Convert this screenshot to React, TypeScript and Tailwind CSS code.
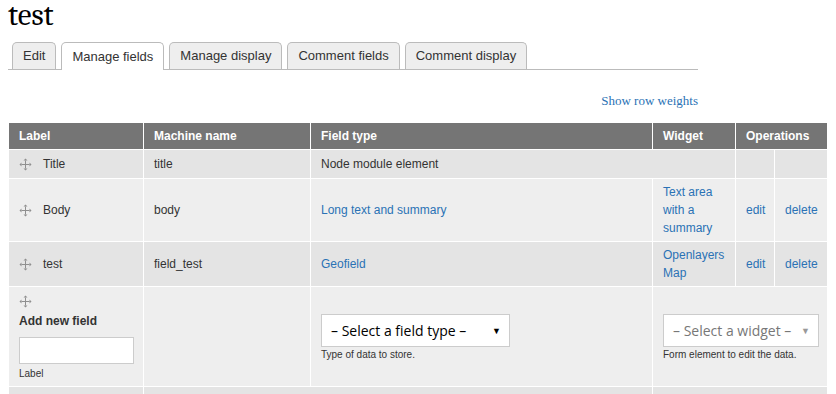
import React from "react";

const sans = "font-['Liberation_Sans',Arial,sans-serif]";
const serif = "font-['Liberation_Serif','Times_New_Roman',serif]";
const link = "text-[#2a72b5]";

function Handle() {
  return (
    <svg width="13" height="13" viewBox="0 0 13 13" className="shrink-0">
      <path d="M6.5 2.5v8M2.5 6.5h8" stroke="#8f8f8f" strokeWidth="1" />
      <path
        d="M6.5 0.5L4.5 2.5h4zM6.5 12.5l-2-2h4zM0.5 6.5l2-2v4zM12.5 6.5l-2-2v4z"
        fill="#8f8f8f"
      />
    </svg>
  );
}

function Tab({ label, active }: { label: string; active?: boolean }) {
  return (
    <div
      className={
        active
          ? "h-[28px] -mb-px px-[10px] flex items-center rounded-t-[5px] border border-b-0 border-[#bbb] bg-white text-[13px] text-[#333]"
          : "h-[27px] px-[10px] flex items-center rounded-t-[5px] border border-b-0 border-[#bbb] bg-[#eee] text-[13px] text-[#333]"
      }
    >
      {label}
    </div>
  );
}

const td = "border border-white px-[10px] py-[4px] align-middle";

export default function App() {
  return (
    <div className={`min-h-screen bg-white px-2 text-[12px] leading-[18px] text-[#333] ${sans}`}>
      <div className="h-[31px] font-serif text-[31px] leading-[31px] text-black">
        <span className="font-serif">test</span>
      </div>

      <div className="mt-[11px] flex w-[690px] items-end gap-[5px] border-b border-[#bbb] pl-[4px]">
        <Tab label="Edit" />
        <Tab label="Manage fields" active />
        <Tab label="Manage display" />
        <Tab label="Comment fields" />
        <Tab label="Comment display" />
      </div>

      <div className={`mt-[22px] w-[690px] text-right text-[13px] leading-[18px] ${serif}`}>
        <a className={link}>Show row weights</a>
      </div>

      <table className="mt-[12px] w-[819px] table-fixed border-collapse">
        <colgroup>
          <col className="w-[135px]" />
          <col className="w-[167px]" />
          <col className="w-[342px]" />
          <col className="w-[83px]" />
          <col className="w-[39px]" />
          <col className="w-[53px]" />
        </colgroup>
        <thead>
          <tr className="h-[26px] bg-[#757575] text-left font-bold text-white">
            <th className={td}>Label</th>
            <th className={td}>Machine name</th>
            <th className={td}>Field type</th>
            <th className={td}>Widget</th>
            <th className={td} colSpan={2}>
              Operations
            </th>
          </tr>
        </thead>
        <tbody>
          <tr className="h-[29px] bg-[#e4e4e4]">
            <td className={td}>
              <div className="flex items-center gap-[11px]">
                <Handle />
                <span>Title</span>
              </div>
            </td>
            <td className={td}>title</td>
            <td className={td} colSpan={2}>
              Node module element
            </td>
            <td className={td}></td>
            <td className={td}></td>
          </tr>
          <tr className="h-[63px] bg-[#eee]">
            <td className={td}>
              <div className="flex items-center gap-[11px]">
                <Handle />
                <span>Body</span>
              </div>
            </td>
            <td className={td}>body</td>
            <td className={td}>
              <a className={link}>Long text and summary</a>
            </td>
            <td className={td}>
              <a className={link}>Text area with a summary</a>
            </td>
            <td className={td}>
              <a className={link}>edit</a>
            </td>
            <td className={td}>
              <a className={link}>delete</a>
            </td>
          </tr>
          <tr className="h-[45px] bg-[#e4e4e4]">
            <td className={td}>
              <div className="flex items-center gap-[11px]">
                <Handle />
                <span>test</span>
              </div>
            </td>
            <td className={td}>field_test</td>
            <td className={td}>
              <a className={link}>Geofield</a>
            </td>
            <td className={td}>
              <a className={link}>Openlayers Map</a>
            </td>
            <td className={td}>
              <a className={link}>edit</a>
            </td>
            <td className={td}>
              <a className={link}>delete</a>
            </td>
          </tr>
          <tr className="h-[99px] bg-[#eee]">
            <td className={`${td} align-top pt-[8px]`}>
              <Handle />
              <div className="mt-[4px] font-bold">Add new field</div>
              <div className="mt-[7px] h-[27px] w-[115px] border border-[#ccc] bg-white" />
              <div className="mt-[2px] text-[10px] leading-[16px]">Label</div>
            </td>
            <td className={td}></td>
            <td className={`${td} align-top pt-[27px]`}>
              <div className="flex h-[33px] w-[189px] items-center justify-between border border-[#ccc] bg-white pl-[9px] pr-[8px] font-['Open_Sans',sans-serif] text-[14px] text-black">
                <span>– Select a field type –</span>
                <span className="text-[9px]">▼</span>
              </div>
              <div className="text-[10px] leading-[16px]">Type of data to store.</div>
            </td>
            <td className={`${td} align-top pt-[27px]`} colSpan={3}>
              <div className="flex h-[33px] w-[156px] items-center justify-between border border-[#ccc] bg-white pl-[9px] pr-[8px] font-['Open_Sans',sans-serif] text-[14px] text-[#777]">
                <span>– Select a widget –</span>
                <span className="text-[9px] text-[#999]">▼</span>
              </div>
              <div className="text-[10px] leading-[16px]">Form element to edit the data.</div>
            </td>
          </tr>
          <tr className="h-[40px] bg-[#e4e4e4]">
            <td className={td}></td>
            <td className={td} colSpan={2}></td>
            <td className={td} colSpan={3}></td>
          </tr>
        </tbody>
      </table>
    </div>
  );
}
